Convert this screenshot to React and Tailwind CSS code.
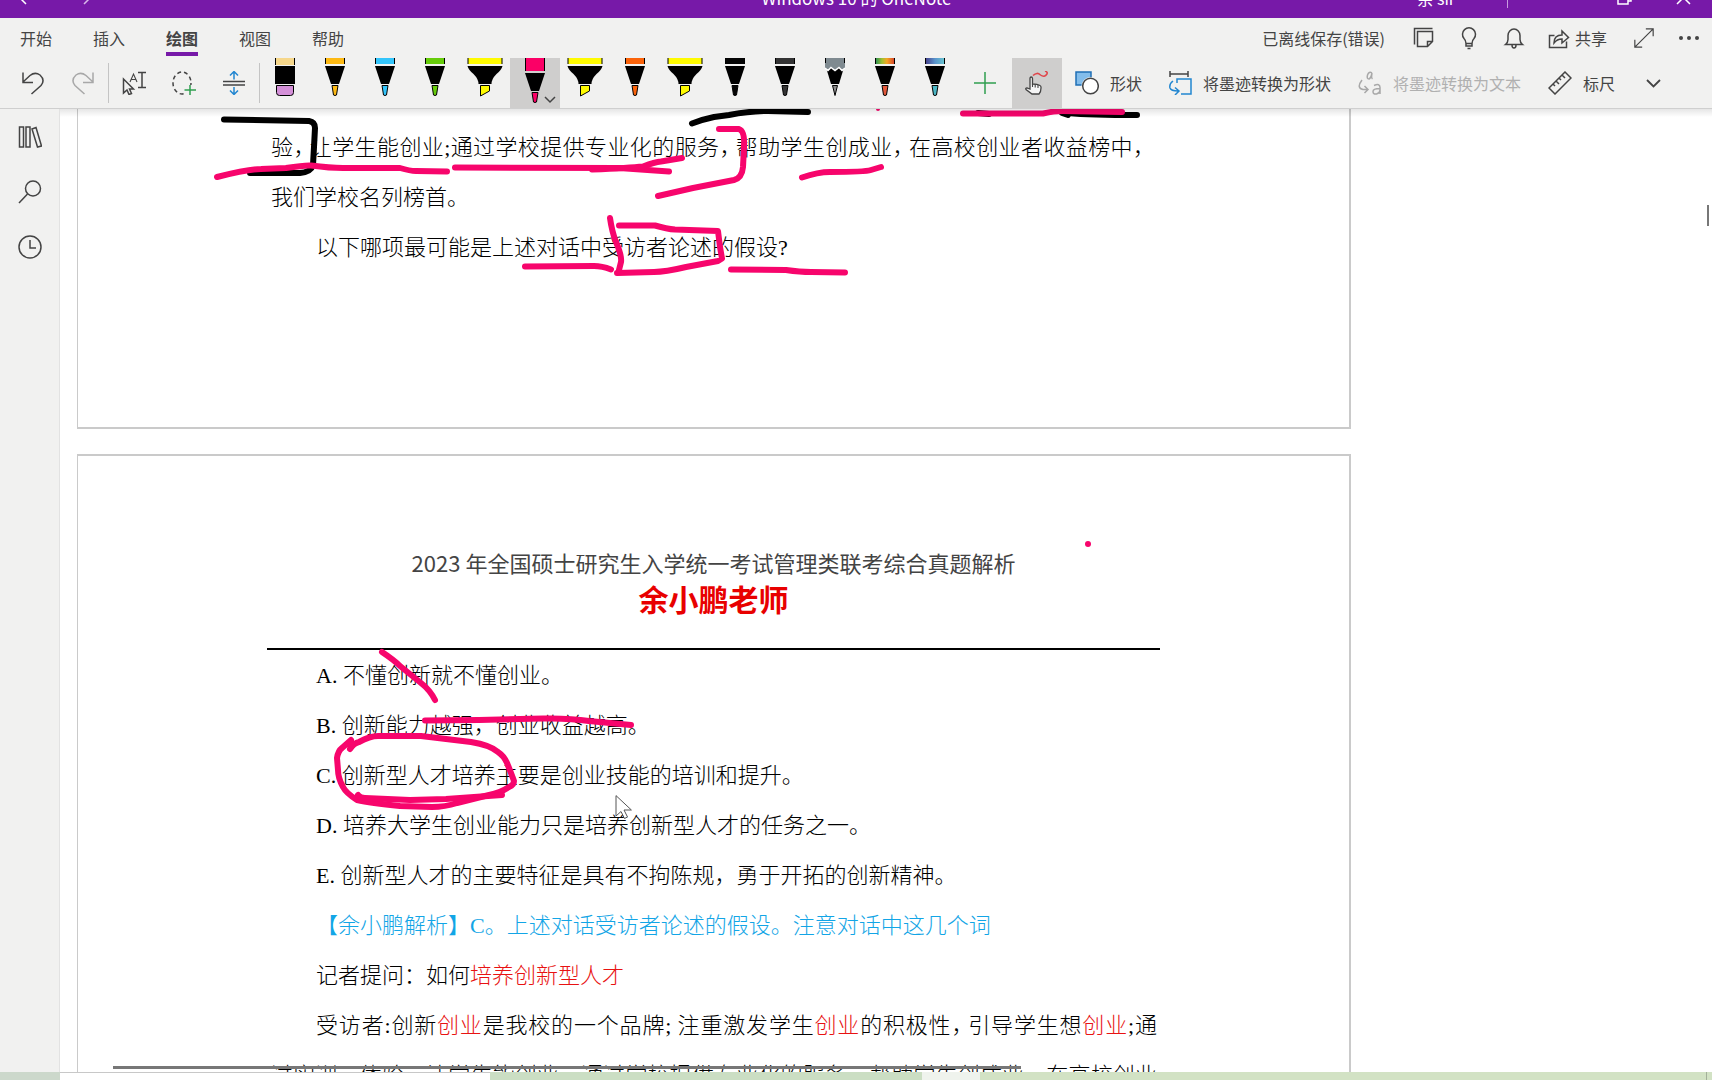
import React, { useState } from 'react';

const INK = '#f7056c';

const tabs = ['开始', '插入', '绘图', '视图', '帮助'];

const pens = [
  { id: 'eraser', type: 'eraser', label: '橡皮擦', color: '#f6d78b', tip: '#d490d8' },
  { id: 'gold', type: 'pen', label: '金色笔', color: '#fdb913' },
  { id: 'sky', type: 'pen', label: '天蓝色笔', color: '#33c5fb' },
  { id: 'green', type: 'pen', label: '绿色笔', color: '#66cc0a' },
  { id: 'hl-1', type: 'highlighter', label: '黄色荧光笔', color: '#fffb00' },
  { id: 'pink', type: 'pen', label: '粉色笔', color: '#fb0066' },
  { id: 'hl-2', type: 'highlighter', label: '黄色荧光笔', color: '#fffb00' },
  { id: 'orange', type: 'pen', label: '橙色笔', color: '#fb630a' },
  { id: 'hl-3', type: 'highlighter', label: '黄色荧光笔', color: '#fffb00' },
  { id: 'black', type: 'pen', label: '黑色笔', color: '#050505' },
  { id: 'gray', type: 'pen', label: '深灰色笔', color: '#333333' },
  { id: 'pencil', type: 'pencil', label: '铅笔', color: '#7f8a90', tip: '#8c8c8c' },
  { id: 'rainbow', type: 'pen', label: '彩虹笔', color: 'url(#rainbow)', tip: '#e2583a' },
  { id: 'galaxy', type: 'pen', label: '银河笔', color: 'url(#galaxy)', tip: '#4bb6c4' },
];

const Pen = ({ pen, selected }) => {
  const tip = pen.tip || pen.color;
  const down = selected ? 7 : 0;

  if (pen.type === 'eraser') {
    return (
      <svg width="50" height="50" viewBox="0 0 50 50">
        <rect x="15" y="0" width="20" height="7" fill={pen.color} />
        <path d="M15.5 0V7M34.5 0V7" stroke="#000" />
        <rect x="15" y="8" width="20" height="18" />
        <path d="M16.5 27.5h17v7q0 3-3 3h-11q-3 0-3-3z" fill={tip} stroke="#000" />
      </svg>
    );
  }
  if (pen.type === 'highlighter') {
    return (
      <svg width="50" height="50" viewBox="0 0 50 50">
        <rect x="8" y="0" width="34" height="6" fill={pen.color} />
        <path d="M8 0V6M42 0V6" stroke="#000" />
        <path d="M7.500 8h35q-1 4-6 8q-5 5-5 10h-13q0-5-5-10q-5-4-6-8z" />
        <path d="M20.500 27.500h9v5.500l-9 5z" fill={tip} stroke="#000" />
      </svg>
    );
  }
  return (
    <svg width="50" height="50" viewBox="0 0 50 50">
      <defs>
        <linearGradient id="rainbow">
          <stop offset="0" stopColor="#1e8a5a" />
          <stop offset="0.35" stopColor="#9fc131" />
          <stop offset="0.6" stopColor="#f5a623" />
          <stop offset="1" stopColor="#d33a2c" />
        </linearGradient>
        <linearGradient id="galaxy">
          <stop offset="0" stopColor="#443a86" />
          <stop offset="0.5" stopColor="#5a94cc" />
          <stop offset="1" stopColor="#69c8cf" />
        </linearGradient>
      </defs>
      <rect x="15" y="0" width="20" height={6 + down} fill={pen.color} />
      <path d={`M15.5 0V${6 + down}M34.5 0V${6 + down}`} stroke="#000" />
      <g transform={`translate(0 ${down})`}>
        {pen.type === 'pencil' ? (
          <>
            <path d="M15 6h20l-6 20h-8z" />
            <path d="M15 5v5l3 2.500l3-3l4 3l4-3l3 3l3-2.500v-5z" fill={pen.color} />
            <path d="M15 10l3 2.500l3-3l4 3l4-3l3 3l3-2.500" fill="none" stroke="#fff" strokeWidth="1.500" />
          </>
        ) : (
          <path d="M15 8h20l-6 18h-8z" />
        )}
        <path
          d={pen.type === 'pencil' ? 'M22.500 27.500h5l-2.500 10z' : 'M22 27.500h6l-1.500 9.500q-1.500 1-3 0z'}
          fill={tip}
          stroke="#000"
        />
      </g>
      {selected && <path d="M35 39l5 5l5-5" fill="none" stroke="#444" strokeWidth="1.500" />}
    </svg>
  );
};

const Icon = ({ children, size = 24, className = 'text-[#444]' }) => (
  <svg
    width={size}
    height={size}
    viewBox="0 0 24 24"
    fill="none"
    stroke="currentColor"
    strokeWidth="1.5"
    className={`shrink-0 ${className}`}
  >
    {children}
  </svg>
);

const TitleBar = () => (
  <header className="h-[18px] shrink-0 overflow-hidden bg-[#7719a8] text-white">
    <div className="-mt-[22px] flex h-10 items-center">
      <div className="flex flex-1 items-center gap-10 pl-[17px]">
        <button aria-label="后退">
          <Icon className="text-white"><path d="M10 6L4 13l5 5" /></Icon>
        </button>
        <button aria-label="前进">
          <Icon className="text-[#d9b8ea]"><path d="M2 6l6 7l-5 5" /></Icon>
        </button>
      </div>
      <h1 className="mr-4 text-[17px] leading-6">Windows 10 的 OneNote</h1>
      <div className="flex flex-1 items-center justify-end">
        <span className="mr-[52px] text-base">余 sir</span>
        <span className="mr-[104px] h-5 w-px bg-[#c99be0]" />
        <button aria-label="还原" className="mr-9">
          <Icon className="text-white"><path d="M6 9h10v9H6zM9 9V6h10v9h-3" /></Icon>
        </button>
        <button aria-label="关闭" className="mr-4">
          <Icon className="text-white"><path d="M5 5l13 13M18 5L5 18" /></Icon>
        </button>
      </div>
    </div>
  </header>
);

const TabRow = ({ active, onChange }) => (
  <div className="flex h-10 items-center justify-between pl-5 pr-3 text-base text-[#444]">
    <nav className="flex gap-[41px]">
      {tabs.map(tab => (
        <button
          key={tab}
          onClick={() => onChange(tab)}
          className={`flex h-9 items-center border-b-4 pt-1 ${active === tab ? 'border-[#7719a8] font-bold' : 'border-transparent'}`}
        >
          {tab}
        </button>
      ))}
    </nav>
    <div className="flex items-center">
      <span className="mr-[27px]">已离线保存(错误)</span>
      <button aria-label="便笺" className="mr-[21px]">
        <Icon><path d="M2.500 18.500V2.500h18M5.500 5.500h15v10l-5 5h-10zM20.500 15.500h-5v5" /></Icon>
      </button>
      <button aria-label="提示" className="mr-[21px]">
        <Icon><path d="M9 17.500q0-3-2-5a6.500 6.500 0 1 1 10 0q-2 2-2 5zM9 17v3h6v-3M10.500 22.500h3" /></Icon>
      </button>
      <button aria-label="通知" className="mr-[21px]">
        <Icon><path d="M3.500 18.500q2.500-2 2.500-5v-4a6 6.500 0 0 1 12 0v4q0 3 2.500 5zM10 19q0 3 2 3t2-3" /></Icon>
      </button>
      <button className="mr-[26px] flex items-center gap-1">
        <Icon><path d="M7.500 9.500h-5v12h17v-6M7 17q0-8 8-8V5l6.500 6.500L15 17v-4q-5 0-8 4z" /></Icon>
        共享
      </button>
      <button aria-label="全屏" className="mr-[21px]">
        <Icon size={22}><path d="M2 22L22 2M14 2h8v8M2 14v8h8" strokeWidth="1.300" /></Icon>
      </button>
      <button aria-label="更多">
        <Icon><g fill="currentColor" stroke="none"><circle cx="5" cy="12" r="2" /><circle cx="13" cy="12" r="2" /><circle cx="21" cy="12" r="2" /></g></Icon>
      </button>
    </div>
  </div>
);

const DrawToolbar = ({ penId, onPick }) => (
  <div className="flex h-[50px] items-center text-base text-[#444]">
    <button aria-label="撤消" className="ml-[21px]">
      <Icon><path d="M2 1.500v10h10M2 11l7-6.500q5-4 10-.5q5.500 5 1 10.500L10.500 23" /></Icon>
    </button>
    <button aria-label="恢复" className="ml-[26px]">
      <Icon className="text-[#a8a8a8]"><path d="M22 1.500v10h-10M22 11l-7-6.500q-5-4-10-.5q-5.500 5-1 10.500L13.500 23" /></Icon>
    </button>
    <span className="ml-[13px] h-10 w-px bg-[#c4c4c4]" />
    <button aria-label="选择对象或键入文本" className="ml-[13px]">
      <Icon>
        <path d="M1.500 8v14l3.500-3l2 4.500l2.500-1l-2-4.500h4z" />
        <path d="M8 11l3.500-8l3.500 8M9.500 8.500h4" strokeWidth="1.100" />
        <path d="M16 1.500h8M16 16.500h8M20 1.500v15" />
      </Icon>
    </button>
    <button aria-label="套索选择" className="ml-[26px]">
      <Icon>
        <ellipse cx="10" cy="12" rx="9" ry="11" strokeDasharray="4 3" />
        <path d="M12 14h12v10H12z" fill="#f1f1f0" stroke="none" />
        <path d="M18 14v10.500M12.500 19h11.500" stroke="#2f9e4f" />
      </Icon>
    </button>
    <button aria-label="插入空间" className="ml-[26px]">
      <Icon>
        <path d="M1 10.500h22M1 14h22" />
        <path d="M12 8.500V1M8 4.500L12 .5l4 4M12 16v7.500M8 19.500l4 4l4-4" stroke="#2286d0" />
      </Icon>
    </button>
    <span className="ml-[13px] h-10 w-px bg-[#c4c4c4]" />
    <div className="flex h-[50px]">
      {pens.map(pen => (
        <button
          key={pen.id}
          aria-label={pen.label}
          aria-pressed={pen.id === penId}
          onClick={() => onPick(pen.id)}
          className={`size-[50px] ${pen.id === penId ? 'bg-[#cfcecd]' : ''}`}
        >
          <Pen pen={pen} selected={pen.id === penId} />
        </button>
      ))}
    </div>
    <button aria-label="添加笔" className="ml-[13px]">
      <Icon><path d="M12 1v22M1 12h22" stroke="#2f9e4f" /></Icon>
    </button>
    <button aria-label="用鼠标或触摸绘图" className="ml-[15px] flex size-[50px] items-center justify-center bg-[#cfcecd]">
      <Icon>
        <path d="M8 4.500q4-4 7.500-.5q4 3 6.500-1q1-2-2-3" stroke="#e0454a" strokeWidth="1.500" />
        <path
          d="M5 18V7.500q0-1.500 1.200-1.500t1.300 1.500v5.500q5 0 7.500 1.500q1.200.5 1 2.500q0 4-2 6H7L1 18.500q-.8-1.500 1-1.500z"
          fill="#f5f5f5"
          strokeWidth="1.300"
        />
        <path d="M7.500 13v3M10.200 13.500v3M13 14v3" strokeWidth="1.100" />
      </Icon>
    </button>
    <button className="ml-[13px] flex items-center gap-[11px]">
      <Icon>
        <path d="M1 1h15v13H1z" fill="#83bdeb" stroke="#1f6fb5" />
        <circle cx="15.500" cy="15" r="9" fill="#f1f1f0" stroke="none" />
        <circle cx="15.500" cy="15" r="7.800" fill="#fff" />
      </Icon>
      形状
    </button>
    <button className="ml-[26px] flex items-center gap-[11px]">
      <Icon>
        <path d="M2 3h18M2 0v6M20 0v6" />
        <path d="M9 12V8h14v15H13M5 10q-4 3-3 7q1 3 8 3M7 16.500l4 3.500l-4 4" stroke="#2286d0" />
      </Icon>
      将墨迹转换为形状
    </button>
    <button disabled className="ml-[27px] flex items-center gap-[11px] text-[#b0b0b0]">
      <Icon className="text-[#a8a8a8]">
        <path d="M14 2q-3-2-4.500 2q-1 4 1.500 4q2-1 3-6q-1 5 .5 6" />
        <path d="M4 9q-6 8 1 9.500h5M6.500 15l3.500 3.500L6.500 22M16 14.500q6-2.500 6 2v6.500M22 17.500q-7 0-7 3q0 3 3.500 2.500q3.500-1 3.500-4" />
      </Icon>
      将墨迹转换为文本
    </button>
    <button className="ml-[27px] flex items-center gap-[11px]">
      <Icon><path d="M17 1l6 6L7 23l-6-6zM14 4l3 3M11 7l2 2M8 10l3 3M5 13l2 2" /></Icon>
      标尺
    </button>
    <button aria-label="更多工具" className="ml-[26px]">
      <Icon><path d="M6 9l6.500 6.500L19 9" strokeWidth="1.800" /></Icon>
    </button>
  </div>
);

const Sidebar = () => (
  <aside className="flex w-[60px] shrink-0 flex-col items-center gap-[31px] border-r border-[#e2e2e2] bg-[#f1f1f0] pt-4">
    <button aria-label="导航">
      <Icon><path d="M1.500 2h4v20h-4zM8 2h4v20H8zM14 4l4-1.500L23.500 21l-4 1z" /></Icon>
    </button>
    <button aria-label="搜索">
      <Icon><circle cx="15" cy="8.500" r="7.500" /><path d="M9.500 14L1 23" /></Icon>
    </button>
    <button aria-label="最近的笔记">
      <Icon><circle cx="12" cy="12" r="11" /><path d="M12 5v8h6" /></Icon>
    </button>
  </aside>
);

// narrow comma used inside tightly set lines
const Comma = () => <span className="inline-block w-4 indent-0 [font-feature-settings:'halt'] [text-align-last:left]">，</span>;

const Red = ({ children }) => <span className="text-[#e81212]">{children}</span>;

const FullLine = ({ className = '', children }) => (
  <p className={`whitespace-nowrap [text-align-last:justify] ${className}`}>{children}</p>
);

const strokes = [
  { color: '#000', d: 'M224 119.500L309 121Q315 122 315 128L314 147L313 165Q311 172 300 173L250 173' },
  { color: '#000', d: 'M692 123.500Q704 119 714 117L729 115Q750 111 768 111L808 112' },
  { color: '#000', d: 'M1062 113L1068 115M1068 113Q1090 115 1137 115M978 113L989 114' },
  { color: INK, d: 'M217 177Q248 169 261 169L286 168Q305 165 311 165.500Q330 168 343 168L400 168Q410 171 416 171L447 171.500' },
  { color: INK, d: 'M455 167.500L619 168L669 171.500' },
  { color: INK, d: 'M592 169.500Q630 168 643 166.500Q655 162 661 161.500L682 158' },
  { color: INK, d: 'M719 129L739 129Q745 131 744 147L743 167Q742 178 734 180L693 188L658 196' },
  { color: INK, d: 'M802 177.500Q818 172 830 172Q865 172 871 170L881 167' },
  { color: INK, d: 'M963 113.500L1043 113.500Q1055 111 1062 111L1122 112' },
  { color: INK, d: 'M610 218Q612 232 616 242Q622 256 621 262L619 270' },
  { color: INK, d: 'M619 225.500L655 225.500Q667 229 675 229.500L718 231L720 247L722 258.500L718 261L686 267Q665 272 654 272L617 273' },
  { color: INK, d: 'M525 266.500L594 266Q602 266 611 269.500' },
  { color: INK, d: 'M731 269.500L786 270Q800 272 811 272L845 272.500' },
  { color: INK, d: 'M382 652Q394 660 400 666L421 683Q430 690 435 700' },
  { color: INK, d: 'M425 720.500L479 720L543 718.500Q570 718 589 721L631 725' },
  { color: INK, d: 'M350 749Q354 743 359 742Q370 736 378 736L421 736L471 742Q490 745 498 752Q504 756 507 763Q510 770 514 781Q514 785 509 787Q500 793 489 795L457 803Q445 807 432 807L400 806Q370 803 357 800Q346 793 343 787Q338 778 338 770L337 758Q338 751 342 748L351 740' },
  { color: INK, d: 'M358 795Q360 798 365 798L410 800L446 799L502 795' },
];

const InkLayer = () => (
  <svg
    width="1652"
    height="963"
    viewBox="60 109 1652 963"
    fill="none"
    strokeWidth="6"
    strokeLinecap="round"
    strokeLinejoin="round"
    className="pointer-events-none absolute left-0 top-0"
  >
    {strokes.map((s, i) => (
      <path key={i} d={s.d} stroke={s.color} />
    ))}
    <circle cx="1088" cy="544" r="3" fill={INK} />
    <circle cx="878" cy="109" r="2" fill={INK} />
    <path
      d="M616 796v20l5-4.500l3.500 7l3-1.500l-3.500-7h7z"
      fill="#fff"
      stroke="#555"
      strokeWidth="1"
    />
  </svg>
);

const NotePage = () => (
  <main className="relative flex-1 overflow-hidden bg-white pl-[17px] font-['Liberation_Serif','Noto_Sans_CJK_SC',serif] text-[22px] font-light leading-[50px] text-black">
    <section className="w-[1274px] border-2 border-l border-t-0 border-[#cacaca] px-[193px] pb-[154px] pt-[14px]">
      <FullLine className="w-[878px]">
        验<Comma />让学生能创业;通过学校提供专业化的服务<Comma />帮助学生创成业<Comma />在高校创业者收益榜中<Comma />
      </FullLine>
      <p>我们学校名列榜首。</p>
      <p className="indent-[45px]">以下哪项最可能是上述对话中受访者论述的假设?</p>
    </section>

    <section className="mt-[25px] w-[1274px] border-2 border-b-0 border-l border-[#cacaca] px-[189px] pt-[88px]">
      <div className="border-b-2 border-black pb-8 text-center font-['Noto_Sans_CJK_SC',sans-serif]">
        <h2 className="text-[22px] font-normal leading-9 text-[#444]">2023 年全国硕士研究生入学统一考试管理类联考综合真题解析</h2>
        <p className="text-[30px] font-bold leading-9 text-[#e80000]">余小鹏老师</p>
      </div>
      <div className="pl-1 pt-px indent-[45px]">
        <p>A. 不懂创新就不懂创业。</p>
        <p>B. 创新能力越强，创业收益越高。</p>
        <p>C. 创新型人才培养主要是创业技能的培训和提升。</p>
        <p>D. 培养大学生创业能力只是培养创新型人才的任务之一。</p>
        <p>E. 创新型人才的主要特征是具有不拘陈规，勇于开拓的创新精神。</p>
        <p className="text-[#12a5e6]">【余小鹏解析】C。上述对话受访者论述的假设。注意对话中这几个词</p>
        <p>记者提问：如何<Red>培养创新型人才</Red></p>
        <FullLine className="w-[886px]">
          受访者:创新<Red>创业</Red>是我校的一个品牌;&nbsp;注重激发学生<Red>创业</Red>的积极性<Comma />引导学生想<Red>创业</Red>;通
        </FullLine>
        <FullLine className="w-[886px] indent-0">
          过实训、体验，让学生能创业，通过学校提供专业化的服务，帮助学生创成业，在高校创业
        </FullLine>
      </div>
    </section>

    <InkLayer />
    <div className="absolute inset-x-0 top-0 h-2 bg-linear-to-b from-black/10 to-transparent" />
    <div className="absolute bottom-[3px] left-[53px] h-[3px] w-[908px] bg-[#777]" />
    <div className="absolute right-[3px] top-24 h-[21px] w-[2px] bg-[#777]" />
  </main>
);

const App = () => {
  const [tab, setTab] = useState('绘图');
  const [penId, setPenId] = useState('pink');

  return (
    <div className="flex h-screen flex-col overflow-hidden font-['Noto_Sans_CJK_SC',sans-serif]">
      <TitleBar />
      <div className="shrink-0 border-b border-[#cfcfcf] bg-[#f1f1f0]">
        <TabRow active={tab} onChange={setTab} />
        <DrawToolbar penId={penId} onPick={setPenId} />
      </div>
      <div className="flex min-h-0 flex-1">
        <Sidebar />
        <NotePage />
      </div>
      <footer className="flex h-2 shrink-0 bg-[#d2e2c4]">
        <div className="w-[60px] bg-[#ccd8cb]" />
        <div className="w-[430px] border-t border-[#c8c8c8] bg-white" />
        <div className="w-[432px] bg-[#cbdec3]" />
        <div className="w-[58px] bg-[#eff3ed]" />
        <div className="mr-[5px] flex-1 border-r border-[#a3b09a]" />
      </footer>
    </div>
  );
};

export default App;
